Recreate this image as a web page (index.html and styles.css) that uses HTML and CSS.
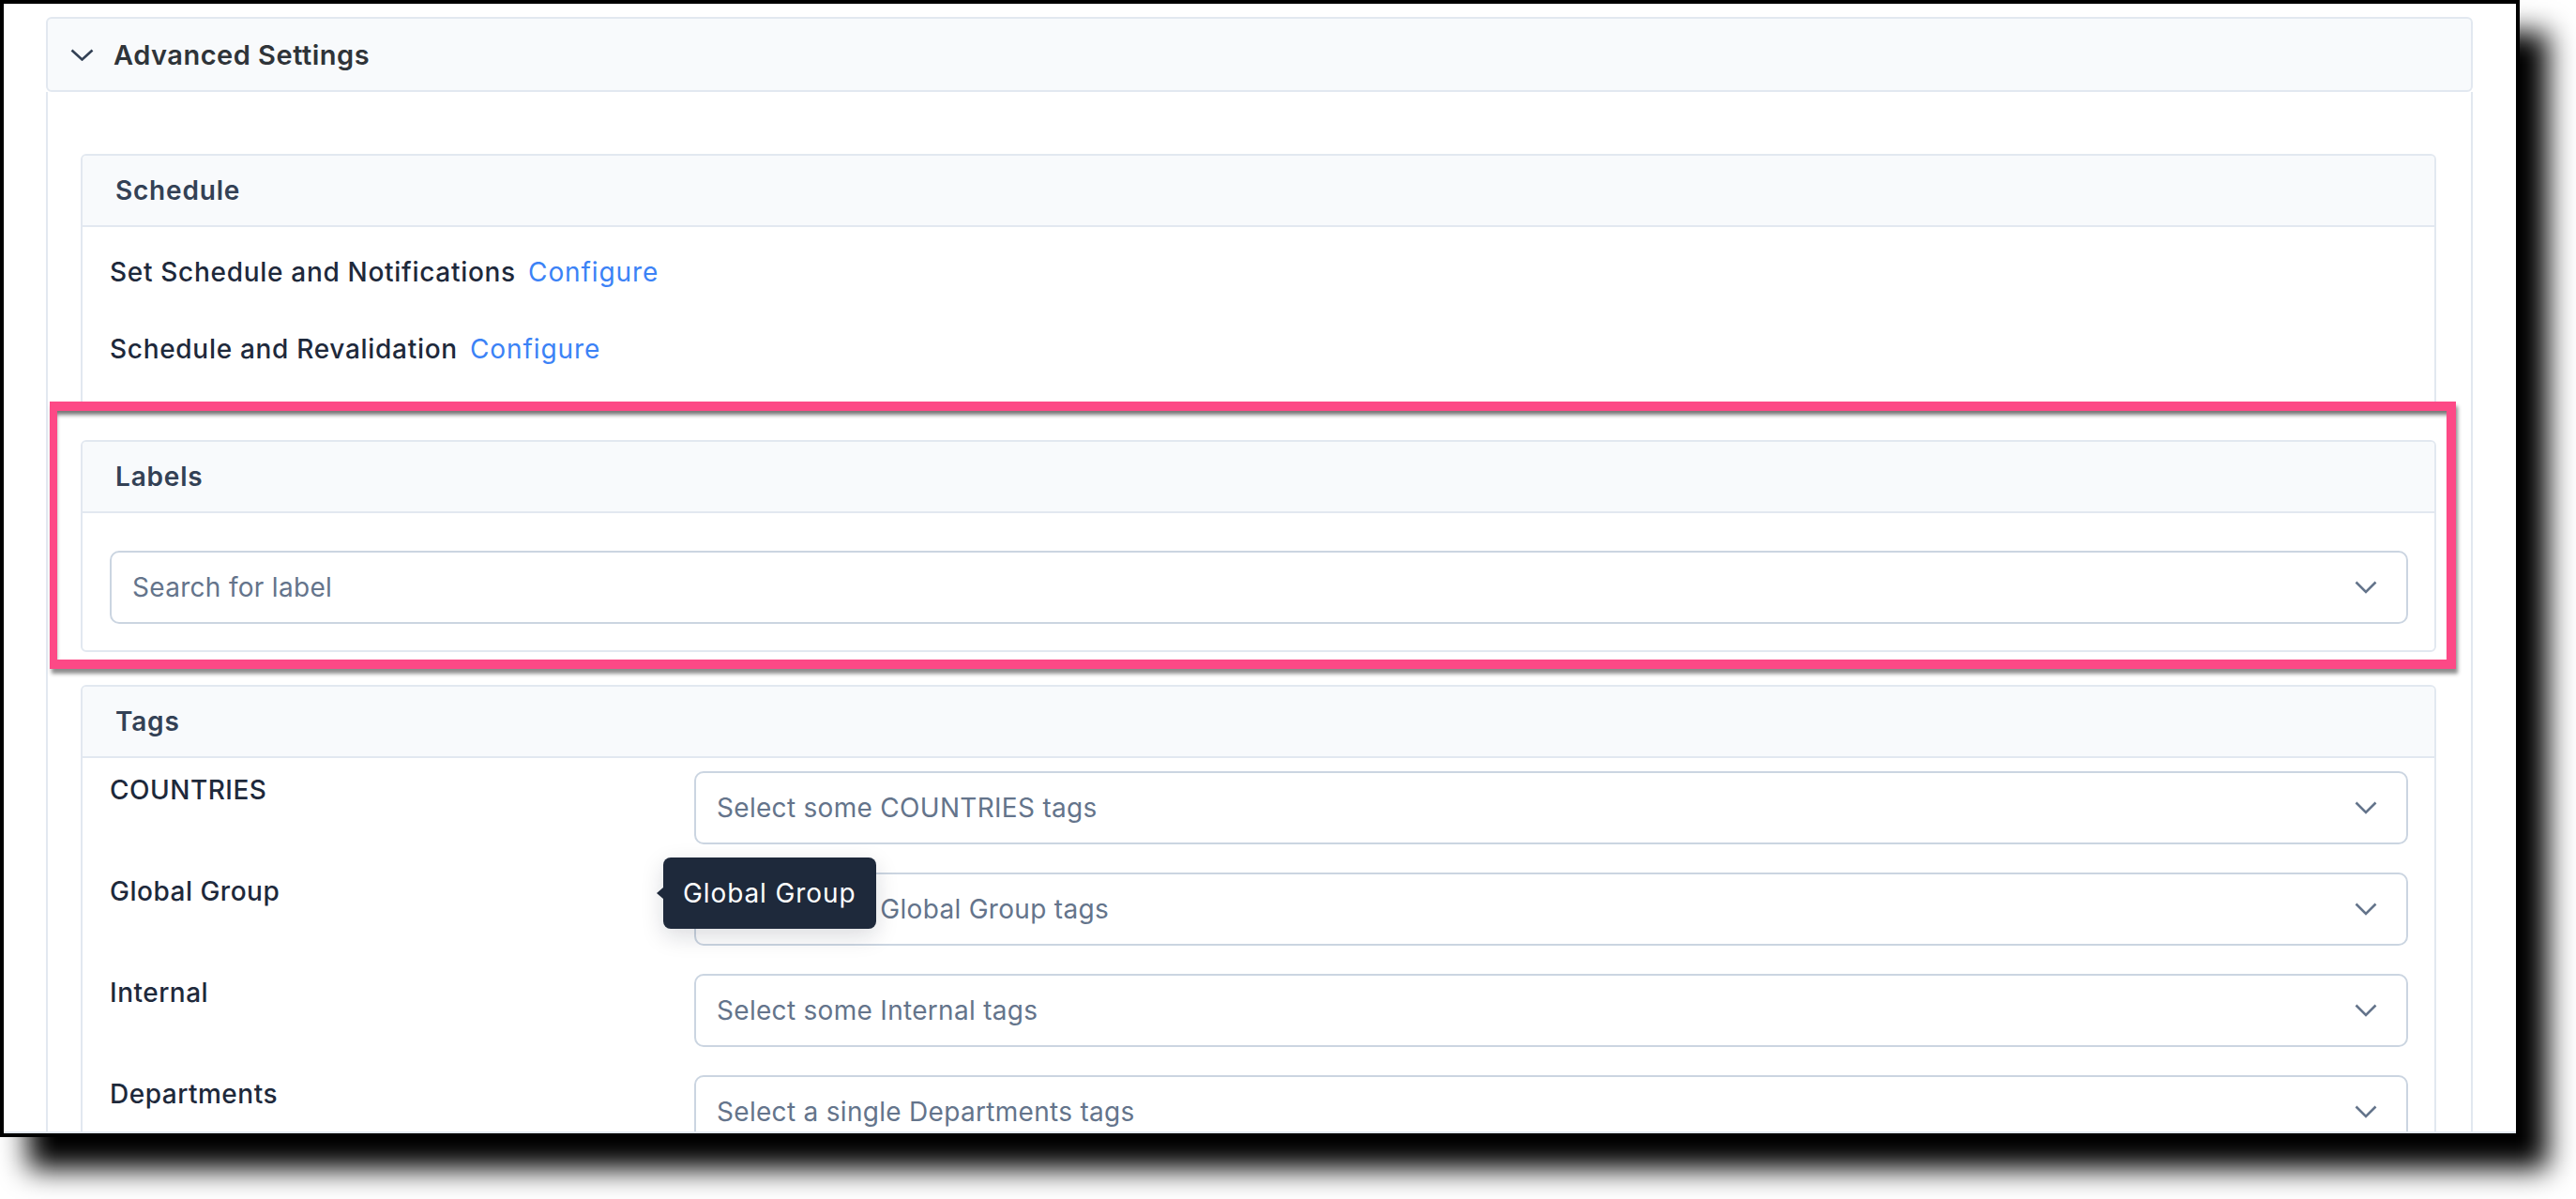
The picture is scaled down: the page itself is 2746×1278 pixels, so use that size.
FILE: index.html
```html
<!DOCTYPE html>
<html lang="en">
<head>
    <meta charset="UTF-8">
    <meta name="viewport" content="width=device-width, initial-scale=1.0">
    <title>Advanced Settings</title>
    <link rel="stylesheet" href="styles.css">
</head>
<body>
    <div class="screen">
        <div class="page">
            <section class="panel">
                <div class="panel-head">
                    <svg class="chevron-head" viewBox="0 0 25 13" width="25" height="13">
                        <path d="M1.5 1.5 L12.5 11.5 L23.5 1.5" />
                    </svg>
                    <span>Advanced Settings</span>
                </div>

                <div class="panel-body">
                    <!-- Schedule -->
                    <div class="card">
                        <div class="card-head">Schedule</div>
                        <div class="card-body schedule">
                            <div class="row">Set Schedule and Notifications <a href="#" class="link">Configure</a></div>
                            <div class="row">Schedule and Revalidation <a href="#" class="link">Configure</a></div>
                        </div>
                    </div>

                    <!-- Labels (highlighted) -->
                    <div class="highlight">
                        <div class="card">
                            <div class="card-head">Labels</div>
                            <div class="card-body labels">
                                <div class="select">
                                    <span class="placeholder">Search for label</span>
                                    <svg class="chevron" viewBox="0 0 24 14" width="24" height="14"><path d="M1.5 1.5 L12 12 L22.5 1.5" /></svg>
                                </div>
                            </div>
                        </div>
                    </div>

                    <!-- Tags -->
                    <div class="card">
                        <div class="card-head">Tags</div>
                        <div class="card-body tags">
                            <div class="tag-label">COUNTRIES</div>
                            <div class="select">
                                <span class="placeholder">Select some COUNTRIES tags</span>
                                <svg class="chevron" viewBox="0 0 24 14" width="24" height="14"><path d="M1.5 1.5 L12 12 L22.5 1.5" /></svg>
                            </div>

                            <div class="tag-label">Global Group</div>
                            <div class="select">
                                <span class="placeholder">Select some Global Group tags</span>
                                <svg class="chevron" viewBox="0 0 24 14" width="24" height="14"><path d="M1.5 1.5 L12 12 L22.5 1.5" /></svg>
                                <div class="tooltip">Global Group</div>
                            </div>

                            <div class="tag-label">Internal</div>
                            <div class="select">
                                <span class="placeholder">Select some Internal tags</span>
                                <svg class="chevron" viewBox="0 0 24 14" width="24" height="14"><path d="M1.5 1.5 L12 12 L22.5 1.5" /></svg>
                            </div>

                            <div class="tag-label">Departments</div>
                            <div class="select">
                                <span class="placeholder">Select a single Departments tags</span>
                                <svg class="chevron" viewBox="0 0 24 14" width="24" height="14"><path d="M1.5 1.5 L12 12 L22.5 1.5" /></svg>
                            </div>
                        </div>
                    </div>
                </div>
            </section>
        </div>
    </div>
</body>
</html>
```

FILE: styles.css
```css
* {
    margin: 0;
    padding: 0;
    box-sizing: border-box;
}

html,
body {
    background: #fff;
}

body {
    min-height: 100vh;
    font-family: Inter, "Open Sans", sans-serif;
    font-size: 28px;
    letter-spacing: 0.5px;
    color: #1e293b;
}

.screen {
    width: 2686px;
    height: 1212px;
    border: 4px solid #000;
    background: #fff;
    box-shadow: 30px 34px 28px #000;
    overflow: hidden;
}

.page {
    height: 100%;
    padding: 14px 46px 0 45px;
    border-bottom: 2px solid #e2e8f0;
    overflow: hidden;
}

/* outer collapsible panel */
.panel-head {
    height: 80px;
    display: flex;
    align-items: center;
    gap: 21px;
    padding-left: 24px;
    background: #f8fafc;
    border: 2px solid #e2e8f0;
    border-radius: 6px;
    font-size: 29px;
    font-weight: 600;
    color: #2f3439;
}

.chevron-head path {
    fill: none;
    stroke: #334155;
    stroke-width: 2.6;
}

.panel-body {
    display: flex;
    flex-direction: column;
    gap: 35px;
    padding: 66px 37px 0 35px;
    border: 2px solid #e2e8f0;
    border-top: none;
    height: 2000px;
}

/* inner cards */
.card {
    background: #fff;
    border: 2px solid #e2e8f0;
    border-radius: 6px;
    overflow: hidden;
}

.card-head {
    height: 76px;
    display: flex;
    align-items: center;
    padding-left: 35px;
    background: #f8fafc;
    border-bottom: 2px solid #e2e8f0;
    font-weight: 600;
    letter-spacing: 0.8px;
    color: #334155;
}

.schedule {
    display: flex;
    flex-direction: column;
    gap: 30px;
    padding: 22px 29px 34px;
}

.row {
    line-height: 52px;
    font-weight: 500;
    letter-spacing: 0.7px;
}

.link {
    margin-left: 5px;
    color: #3b82f6;
    text-decoration: none;
    font-weight: 400;
    letter-spacing: 0.9px;
}

/* annotation frame round the labels card */
.highlight {
    margin: -41px -21px -18px -33px;
    padding: 31px 11px 8px 25px;
    background: #fff;
    border: 10px solid #fd4986;
    border-left-width: 8px;
    box-shadow: inset 1px 6px 4px -2px rgba(0, 0, 0, 0.55), 2px 5px 4px rgba(0, 0, 0, 0.45);
}

.labels {
    padding: 40px 28px 28px 29px;
}

/* select boxes */
.select {
    position: relative;
    height: 78px;
    display: flex;
    align-items: center;
    justify-content: space-between;
    padding: 0 31px 0 22px;
    border: 2px solid #cbd5e1;
    border-radius: 10px;
    background: #fff;
}

.placeholder {
    color: #64748b;
    letter-spacing: 0.3px;
}

.chevron path {
    fill: none;
    stroke: #64748b;
    stroke-width: 2.6;
}

.tags {
    display: grid;
    grid-template-columns: 623px 1fr;
    row-gap: 30px;
    padding: 14px 28px 30px 29px;
}

.tag-label {
    line-height: 40px;
    font-weight: 500;
}

.tooltip {
    position: absolute;
    left: -35px;
    top: -18px;
    height: 76px;
    padding: 0 21px;
    line-height: 76px;
    letter-spacing: 0.9px;
    background: #1e293b;
    color: #fff;
    border-radius: 8px;
    box-shadow: 0 8px 24px rgba(15, 23, 42, 0.15);
}

.tooltip::before {
    content: "";
    position: absolute;
    left: -7px;
    top: 32px;
    border-top: 6px solid transparent;
    border-bottom: 6px solid transparent;
    border-right: 7px solid #1e293b;
}
```
